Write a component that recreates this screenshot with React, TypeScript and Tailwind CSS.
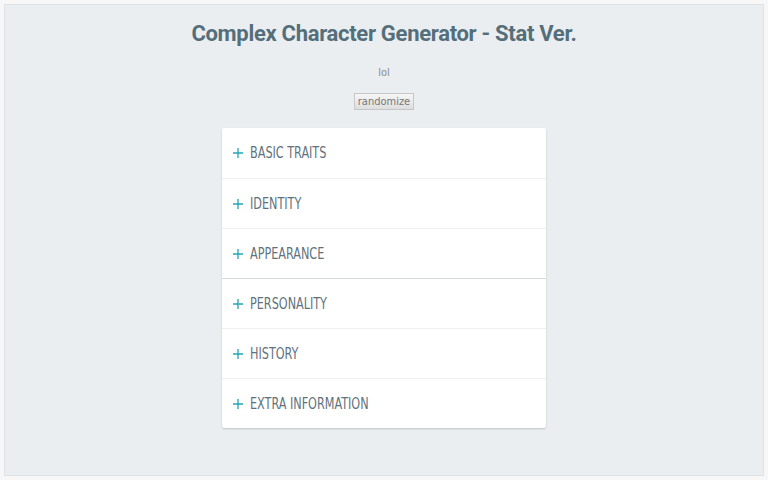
const sections = [
  'Basic Traits',
  'Identity',
  'Appearance',
  'Personality',
  'History',
  'Extra Information',
];

const condensed = "font-['Liberation_Sans_Narrow','DejaVu_Sans_Condensed',sans-serif]";

export default function App() {
  return (
    <div className="min-h-[480px] bg-[#f7f7f7] p-1 font-['Roboto',sans-serif]">
      <div className="flex min-h-[472px] flex-col items-center border border-[#dde2e6] bg-[#ebeef1] pt-[14px]">
        <h1 className="text-[22px] font-bold leading-[30px] tracking-[-0.3px] text-[#546e7a]">
          Complex Character Generator - Stat Ver.
        </h1>
        <p className={`mt-[17px] text-[11px] leading-[14px] text-[#8a8a8a] ${condensed}`}>lol</p>
        <button
          className={`mt-[13px] h-[17px] border border-[#c6c6c6] bg-gradient-to-b from-[#f6f6f6] to-[#dedede] px-[3px] text-[11px] leading-[14px] text-[#777] ${condensed}`}
        >
          randomize
        </button>
        {/* Accordion */}
        <div className="mt-[18px] w-[324px] rounded-[2px] bg-white shadow-[0_1px_2px_rgba(0,0,0,0.18)]">
          {sections.map((title, i) => (
            <div
              key={title}
              className={`flex h-[50px] items-center pl-[10px] ${
                i === 0 ? '' : i === 3 ? 'border-t border-[#d6d9dc]' : 'border-t border-[#eef0f2]'
              }`}
            >
              <svg width="12" height="12" viewBox="0 0 12 12" className="mr-[6px]">
                <path d="M6 1v10M1 6h10" stroke="#26a5b5" strokeWidth="1.3" />
              </svg>
              <span
                className={`origin-left scale-x-[0.78] text-[16px] uppercase text-[#5f727c] ${condensed}`}
              >
                {title}
              </span>
            </div>
          ))}
        </div>
      </div>
    </div>
  );
}
